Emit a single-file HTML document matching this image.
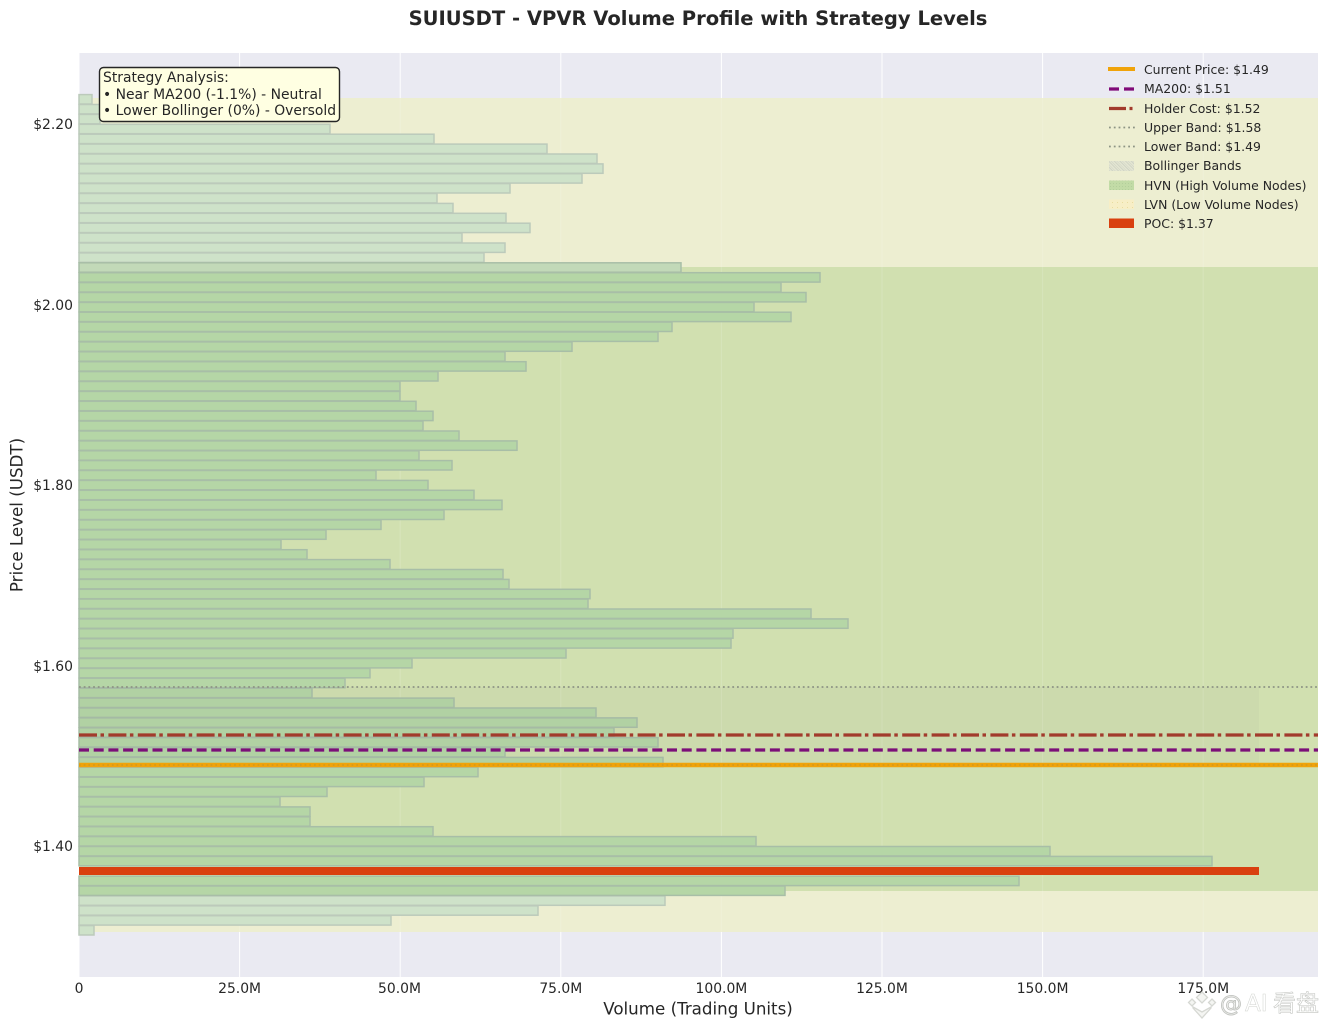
<!DOCTYPE html>
<html>
<head>
<meta charset="utf-8">
<style>
html,body{margin:0;padding:0;background:#fff;width:1328px;height:1029px;overflow:hidden}
svg{display:block}
text{font-family:"DejaVu Sans","Liberation Sans","Noto Sans CJK SC",sans-serif;fill:#262626}
.t{font-size:13.9px}
.l{font-size:12.45px}
.b rect{stroke-width:1.5;height:9.4px}
.lt rect{fill:#cee2c9;stroke:#bccabb}
.dk rect{fill:#b5d6a6;stroke:#a8bea7}
</style>
</head>
<body>
<svg width="1328" height="1029" viewBox="0 0 1328 1029" xmlns="http://www.w3.org/2000/svg">
<defs>
<pattern id="hb" width="4" height="4" patternUnits="userSpaceOnUse" patternTransform="rotate(45)"><rect width="4" height="4" fill="#e4e6d2"/><path d="M0 0H4M0 2H4" stroke="#cfd3c4" stroke-width="1"/></pattern>
<pattern id="hv" width="3" height="3" patternUnits="userSpaceOnUse"><rect width="3" height="3" fill="#c2dba6"/><rect width="1" height="1" fill="#b3cf9b"/></pattern>
<pattern id="lv" width="5" height="5" patternUnits="userSpaceOnUse"><rect width="5" height="5" fill="#f7eec6"/><rect x="2" y="2" width="1" height="1" fill="#e8dca0"/></pattern>
</defs>
<rect width="1328" height="1029" fill="#fff"/>
<text x="698" y="25" text-anchor="middle" style="font-size:19.55px;font-weight:bold">SUIUSDT - VPVR Volume Profile with Strategy Levels</text>

<rect x="79" y="53" width="1239" height="924" fill="#eaeaf2"/>
<g stroke="#fff" stroke-width="1">
<path d="M239.6 53V977M400.2 53V977M560.8 53V977M721.4 53V977M882 53V977M1042.6 53V977M1203.2 53V977M79 53V977"/>
<path d="M79 124H1318M79 305H1318M79 485H1318M79 666H1318M79 846H1318"/>
</g>
<rect x="79" y="98" width="1239" height="834" fill="#ecedcf" fill-opacity=".97"/>
<rect x="79" y="267" width="1239" height="624" fill="#d0dfae" fill-opacity=".97"/>
<g stroke="#fff" stroke-width="1" opacity=".14">
<path d="M239.6 98V932M400.2 98V932M560.8 98V932M721.4 98V932M882 98V932M1042.6 98V932M1203.2 98V932"/>
</g>

<g class="b lt">
<rect x="79" y="94.6" width="13" height="8.9"/>
<rect x="79" y="104.5" width="33" height="8.9"/>
<rect x="79" y="114.4" width="21" height="8.9"/>
<rect x="79" y="124.3" width="251" height="8.9"/>
<rect x="79" y="134.2" width="355" height="8.9"/>
<rect x="79" y="144.1" width="468" height="8.9"/>
<rect x="79" y="154" width="518" height="8.9"/>
<rect x="79" y="163.9" width="524" height="8.9"/>
<rect x="79" y="173.7" width="503" height="8.9"/>
<rect x="79" y="183.6" width="431" height="8.9"/>
<rect x="79" y="193.5" width="358" height="8.9"/>
<rect x="79" y="203.4" width="374" height="8.9"/>
<rect x="79" y="213.3" width="427" height="8.9"/>
<rect x="79" y="223.2" width="451" height="8.9"/>
<rect x="79" y="233.1" width="383" height="8.9"/>
<rect x="79" y="243" width="426" height="8.9"/>
<rect x="79" y="252.9" width="405" height="8.9"/>
<rect x="79" y="895.9" width="586" height="8.9"/>
<rect x="79" y="905.8" width="459" height="8.9"/>
<rect x="79" y="915.7" width="312" height="8.9"/>
<rect x="79" y="925.6" width="15" height="8.9"/>
</g>
<g class="b dk">
<rect x="79" y="262.8" width="602" height="8.9" style="fill:#c2d9b8"/>
<rect x="79" y="272.7" width="741" height="8.9"/>
<rect x="79" y="282.6" width="702" height="8.9"/>
<rect x="79" y="292.5" width="727" height="8.9"/>
<rect x="79" y="302.4" width="675" height="8.9"/>
<rect x="79" y="312.2" width="712" height="8.9"/>
<rect x="79" y="322.1" width="593" height="8.9"/>
<rect x="79" y="332" width="579" height="8.9"/>
<rect x="79" y="341.9" width="493" height="8.9"/>
<rect x="79" y="351.8" width="426" height="8.9"/>
<rect x="79" y="361.7" width="447" height="8.9"/>
<rect x="79" y="371.6" width="359" height="8.9"/>
<rect x="79" y="381.5" width="321" height="8.9"/>
<rect x="79" y="391.4" width="321" height="8.9"/>
<rect x="79" y="401.3" width="337" height="8.9"/>
<rect x="79" y="411.2" width="354" height="8.9"/>
<rect x="79" y="421.1" width="344" height="8.9"/>
<rect x="79" y="431" width="380" height="8.9"/>
<rect x="79" y="440.9" width="438" height="8.9"/>
<rect x="79" y="450.8" width="340" height="8.9"/>
<rect x="79" y="460.6" width="373" height="8.9"/>
<rect x="79" y="470.5" width="297" height="8.9"/>
<rect x="79" y="480.4" width="349" height="8.9"/>
<rect x="79" y="490.3" width="395" height="8.9"/>
<rect x="79" y="500.2" width="423" height="8.9"/>
<rect x="79" y="510.1" width="365" height="8.9"/>
<rect x="79" y="520" width="302" height="8.9"/>
<rect x="79" y="529.9" width="247" height="8.9"/>
<rect x="79" y="539.8" width="202" height="8.9"/>
<rect x="79" y="549.7" width="228" height="8.9"/>
<rect x="79" y="559.6" width="311" height="8.9"/>
<rect x="79" y="569.5" width="424" height="8.9"/>
<rect x="79" y="579.4" width="430" height="8.9"/>
<rect x="79" y="589.3" width="511" height="8.9"/>
<rect x="79" y="599.1" width="509" height="8.9"/>
<rect x="79" y="609" width="732" height="8.9"/>
<rect x="79" y="618.9" width="769" height="8.9"/>
<rect x="79" y="628.8" width="654" height="8.9"/>
<rect x="79" y="638.7" width="652" height="8.9"/>
<rect x="79" y="648.6" width="487" height="8.9"/>
<rect x="79" y="658.5" width="333" height="8.9"/>
<rect x="79" y="668.4" width="291" height="8.9"/>
<rect x="79" y="678.3" width="266" height="8.9"/>
<rect x="79" y="688.2" width="233" height="8.9"/>
<rect x="79" y="698.1" width="375" height="8.9"/>
<rect x="79" y="708" width="517" height="8.9"/>
<rect x="79" y="717.9" width="558" height="8.9"/>
<rect x="79" y="727.8" width="535" height="8.9"/>
<rect x="79" y="737.6" width="579" height="8.9"/>
<rect x="79" y="747.5" width="426" height="8.9"/>
<rect x="79" y="757.4" width="584" height="8.9"/>
<rect x="79" y="767.3" width="399" height="8.9"/>
<rect x="79" y="777.2" width="345" height="8.9"/>
<rect x="79" y="787.1" width="248" height="8.9"/>
<rect x="79" y="797" width="201" height="8.9"/>
<rect x="79" y="806.9" width="231" height="8.9"/>
<rect x="79" y="816.8" width="231" height="8.9"/>
<rect x="79" y="826.7" width="354" height="8.9"/>
<rect x="79" y="836.6" width="677" height="8.9"/>
<rect x="79" y="846.5" width="971" height="8.9"/>
<rect x="79" y="856.4" width="1133" height="8.9"/>
<rect x="79" y="876.2" width="940" height="8.9"/>
<rect x="79" y="886" width="706" height="8.9"/>
</g>
<rect x="79" y="867" width="1180" height="8" fill="#d9400f"/>

<rect x="79" y="687" width="1180" height="78" fill="#6e6e6e" fill-opacity=".05"/>

<path d="M79 687H1318" stroke="#8d9484" stroke-width="1.8" stroke-dasharray="1.8 2.9"/>
<path d="M79 735H1318" stroke="#a23b2c" stroke-width="3.2" stroke-dasharray="18 3.5 3.5 4.4"/>
<path d="M79 750H1318" stroke="#7b0f78" stroke-width="3.2" stroke-dasharray="10 4.7"/>
<path d="M79 765H1318" stroke="#f0a30a" stroke-width="4.4"/>
<path d="M79 765H1318" stroke="#a98f3a" stroke-width="1" stroke-dasharray="1.7 3" opacity=".7"/>

<!-- info box -->
<rect x="99.5" y="67.5" width="240" height="54" rx="4" fill="#ffffe2" stroke="#262626" stroke-width="1.4"/>
<text class="t" x="103" y="82">Strategy Analysis:</text>
<text class="t" x="103" y="99">• Near MA200 (-1.1%) - Neutral</text>
<text class="t" x="103" y="115">• Lower Bollinger (0%) - Oversold</text>

<!-- legend -->
<path d="M1108 69H1135" stroke="#f0a30a" stroke-width="4"/>
<path d="M1109 89H1135" stroke="#800a78" stroke-width="3.2" stroke-dasharray="10 5"/>
<path d="M1109 108.5H1135" stroke="#a23b2c" stroke-width="3.2" stroke-dasharray="17 3.5 3 4"/>
<path d="M1109 127.5H1135" stroke="#8d9484" stroke-width="1.7" stroke-dasharray="1.8 3"/>
<path d="M1109 146.5H1135" stroke="#8d9484" stroke-width="1.7" stroke-dasharray="1.8 3"/>
<rect x="1109" y="161" width="25" height="10" fill="url(#hb)"/>
<rect x="1109" y="180.5" width="25" height="9.5" fill="url(#hv)"/>
<rect x="1109" y="199.5" width="25" height="9.5" fill="url(#lv)"/>
<rect x="1109" y="218.5" width="25" height="9.5" fill="#d9400f"/>
<text class="l" x="1144" y="74">Current Price: $1.49</text>
<text class="l" x="1144" y="93">MA200: $1.51</text>
<text class="l" x="1144" y="113">Holder Cost: $1.52</text>
<text class="l" x="1144" y="132">Upper Band: $1.58</text>
<text class="l" x="1144" y="151">Lower Band: $1.49</text>
<text class="l" x="1144" y="170">Bollinger Bands</text>
<text class="l" x="1144" y="190">HVN (High Volume Nodes)</text>
<text class="l" x="1144" y="209">LVN (Low Volume Nodes)</text>
<text class="l" x="1144" y="228">POC: $1.37</text>

<!-- y ticks -->
<g text-anchor="end">
<text class="t" x="73" y="129">$2.20</text>
<text class="t" x="73" y="310">$2.00</text>
<text class="t" x="73" y="490">$1.80</text>
<text class="t" x="73" y="671">$1.60</text>
<text class="t" x="73" y="851">$1.40</text>
</g>
<text transform="translate(22.5 515) rotate(-90)" text-anchor="middle" style="font-size:16.7px">Price Level (USDT)</text>

<!-- x ticks -->
<g text-anchor="middle">
<text class="t" x="79" y="993">0</text>
<text class="t" x="239.6" y="993">25.0M</text>
<text class="t" x="399.5" y="993">50.0M</text>
<text class="t" x="560.8" y="993">75.0M</text>
<text class="t" x="721.4" y="993">100.0M</text>
<text class="t" x="882" y="993">125.0M</text>
<text class="t" x="1042.6" y="993">150.0M</text>
<text class="t" x="1203.2" y="993">175.0M</text>
</g>
<text x="698" y="1014.5" text-anchor="middle" style="font-size:16.7px">Volume (Trading Units)</text>

<!-- watermark -->
<g fill="#f4f5f2" stroke="#d6d8d3" stroke-width="1.3">
<path d="M1202 992l5.5 5.5-5.5 5.5-5.5-5.5zM1192 999l3.5 3.5-3.5 3.5-3.5-3.5zM1212 999l3.5 3.5-3.5 3.5-3.5-3.5z"/>
<path d="M1193 1007l9 5 9-5 0 1-9 10-9-10z"/>
</g>
<text x="1220" y="1011" style="font-size:22px;fill:#f6f6f4;stroke:#c2c4c0;stroke-width:.9">@</text>
<text x="1245" y="1011" style="font-size:23px;fill:#fff;stroke:#d2d4d0;stroke-width:.5">AI</text>
<text x="1273" y="1011" style="font-size:23px;fill:#fff;stroke:#c4c6c2;stroke-width:.6;font-family:'Noto Sans CJK SC',sans-serif">看盘</text>
</svg>
</body>
</html>
